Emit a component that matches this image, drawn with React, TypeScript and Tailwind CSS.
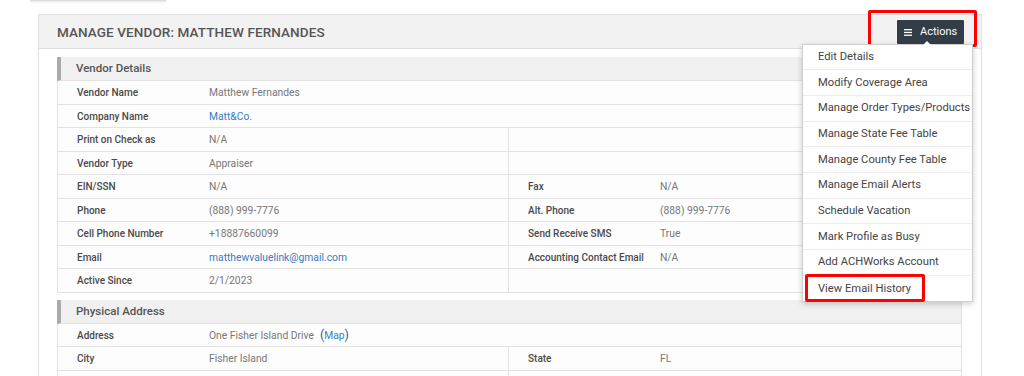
type Cell = { label: string; value?: string; link?: boolean };
type Row = { left: Cell; right?: Cell | null; full?: boolean };

const vendorRows: Row[] = [
  { left: { label: "Vendor Name", value: "Matthew Fernandes" }, full: true },
  { left: { label: "Company Name", value: "Matt&Co.", link: true }, full: true },
  { left: { label: "Print on Check as", value: "N/A" }, right: null },
  { left: { label: "Vendor Type", value: "Appraiser" }, right: null },
  { left: { label: "EIN/SSN", value: "N/A" }, right: { label: "Fax", value: "N/A" } },
  { left: { label: "Phone", value: "(888) 999-7776" }, right: { label: "Alt. Phone", value: "(888) 999-7776" } },
  { left: { label: "Cell Phone Number", value: "+18887660099" }, right: { label: "Send Receive SMS", value: "True" } },
  {
    left: { label: "Email", value: "matthewvaluelink@gmail.com", link: true },
    right: { label: "Accounting Contact Email", value: "N/A" },
  },
  { left: { label: "Active Since", value: "2/1/2023" }, right: null },
];

const menuItems = [
  "Edit Details",
  "Modify Coverage Area",
  "Manage Order Types/Products",
  "Manage State Fee Table",
  "Manage County Fee Table",
  "Manage Email Alerts",
  "Schedule Vacation",
  "Mark Profile as Busy",
  "Add ACHWorks Account",
  "View Email History",
];

function CellView({ cell }: { cell: Cell }) {
  return (
    <div className="flex items-center h-full pl-[19px] pt-[1px]">
      <span className="w-[132px] shrink-0 whitespace-nowrap text-[10px] font-medium text-[#4a4a4a]">{cell.label}</span>
      <span className={`whitespace-nowrap text-[10.3px] ${cell.link ? "text-[#3a7bbf]" : "text-[#777]"}`}>{cell.value}</span>
    </div>
  );
}

function DetailRow({ row }: { row: Row }) {
  return (
    <div className="flex h-[23.5px] border-b border-[#e2e2e2] bg-[#fdfdfd]">
      {row.full ? (
        <div className="flex-1">
          <CellView cell={row.left} />
        </div>
      ) : (
        <>
          <div className="w-[451px] shrink-0 border-r border-[#e2e2e2]">
            <CellView cell={row.left} />
          </div>
          <div className="flex-1">{row.right && <CellView cell={row.right} />}</div>
        </>
      )}
    </div>
  );
}

function SectionHeader({ title }: { title: string }) {
  return (
    <div className="flex items-center h-[24px] bg-[#f0f0f0] border-l-[4px] border-[#aaaaaa] border-b border-b-[#e2e2e2] pl-[15px] pt-[1px]">
      <span className="text-[11.5px] font-medium text-[#555]">{title}</span>
    </div>
  );
}

function ActionsMenu() {
  return (
    <div className="relative">
      <button className="flex items-center h-[24px] w-[67px] bg-[#333d47] text-white text-[11px] pl-[7px] pt-[1px] rounded-[1px]">
        <svg width="8" height="7" viewBox="0 0 8 7" className="mr-[8px]">
          <rect x="0" y="0" width="8" height="1.3" fill="#fff" />
          <rect x="0" y="2.8" width="8" height="1.3" fill="#fff" />
          <rect x="0" y="5.6" width="8" height="1.3" fill="#fff" />
        </svg>
        Actions
      </button>
      <div className="absolute -left-[29px] -right-[13px] -top-[10px] -bottom-[3px] border-[3px] border-[#ff0000] rounded-[2px]" />
      <div className="absolute top-[24px] -right-[9px] w-[171px] bg-white border border-[#cfcfcf] shadow-[0_2px_6px_rgba(0,0,0,0.2)] z-10">
        <div className="absolute -top-[4px] left-[120px] w-0 h-0 border-l-[4px] border-r-[4px] border-b-[4px] border-l-transparent border-r-transparent border-b-white" />
        {menuItems.map((item, i) => (
          <div
            key={item}
            className={`relative flex items-center h-[25.7px] pl-[15px] pt-[1px] whitespace-nowrap text-[11.2px] text-[#444] ${
              i < menuItems.length - 1 ? "border-b border-[#ececec]" : ""
            }`}
          >
            {item}
            {i === menuItems.length - 1 && (
              <div className="absolute left-[2px] w-[120px] -top-[2px] -bottom-[1px] border-[3px] border-[#ff0000] rounded-[2px]" />
            )}
          </div>
        ))}
      </div>
    </div>
  );
}

export default function App() {
  return (
    <div className="w-[1024px] h-[376px] bg-white overflow-hidden font-['Roboto',sans-serif]">
      <div className="ml-[30px] w-[136px] h-[1px] bg-[#dcdcdc] shadow-[0_1px_2px_rgba(0,0,0,0.15)]" />
      <div className="ml-[38px] mt-[13px] w-[944px] border border-[#e0e0e0] bg-white">
        <div className="flex items-center justify-between h-[34px] bg-[#f2f2f2] border-b border-[#e0e0e0] pl-[18px] pr-[17px]">
          <h1 className="text-[13.5px] font-medium text-[#555] tracking-[0.1px] pt-[1px]">MANAGE VENDOR: MATTHEW FERNANDES</h1>
          <ActionsMenu />
        </div>
        <div className="pl-[18px] pr-[19px] pt-[8px] flex flex-col gap-[7px]">
          <div className="border-r border-[#e2e2e2]">
            <SectionHeader title="Vendor Details" />
            <div className="border-l border-[#e2e2e2]">
              {vendorRows.map((r) => (
                <DetailRow key={r.left.label} row={r} />
              ))}
            </div>
          </div>
          <div className="border-r border-[#e2e2e2]">
            <SectionHeader title="Physical Address" />
            <div className="border-l border-[#e2e2e2]">
              <div className="flex h-[23.5px] border-b border-[#e2e2e2] bg-[#fdfdfd]">
                <div className="flex items-center h-full pl-[19px] pt-[1px]">
                  <span className="w-[132px] shrink-0 text-[10px] font-medium text-[#4a4a4a]">Address</span>
                  <span className="text-[10.3px] text-[#777]">One Fisher Island Drive</span>
                  <span className="ml-[6px] text-[12.5px] text-[#2d5f91]">(</span>
                  <span className="text-[10.3px] text-[#3a7bbf]">Map</span>
                  <span className="text-[12.5px] text-[#2d5f91]">)</span>
                </div>
              </div>
              <DetailRow row={{ left: { label: "City", value: "Fisher Island" }, right: { label: "State", value: "FL" } }} />
              <div className="flex h-[23.5px] bg-[#fdfdfd]">
                <div className="w-[451px] shrink-0 border-r border-[#e2e2e2]" />
              </div>
            </div>
          </div>
        </div>
      </div>
    </div>
  );
}
